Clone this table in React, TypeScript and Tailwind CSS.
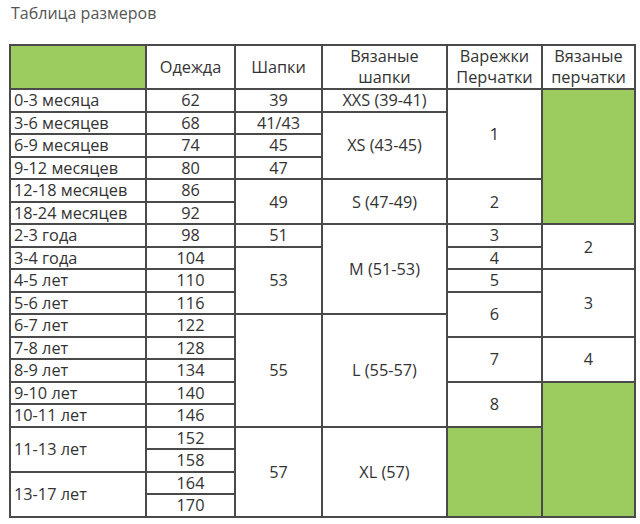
const green = 'bg-[#9ccb5f]';

type Cell = { text?: string; rows?: number; green?: boolean; left?: boolean };

// Body rows, each listing the cells that start in that row
const body: Cell[][] = [
  [{ text: '0-3 месяца', left: true }, { text: '62' }, { text: '39' }, { text: 'XXS (39-41)' }, { text: '1', rows: 4 }, { green: true, rows: 6 }],
  [{ text: '3-6 месяцев', left: true }, { text: '68' }, { text: '41/43' }, { text: 'XS (43-45)', rows: 3 }],
  [{ text: '6-9 месяцев', left: true }, { text: '74' }, { text: '45' }],
  [{ text: '9-12 месяцев', left: true }, { text: '80' }, { text: '47' }],
  [{ text: '12-18 месяцев', left: true }, { text: '86' }, { text: '49', rows: 2 }, { text: 'S (47-49)', rows: 2 }, { text: '2', rows: 2 }],
  [{ text: '18-24 месяцев', left: true }, { text: '92' }],
  [{ text: '2-3 года', left: true }, { text: '98' }, { text: '51' }, { text: 'M (51-53)', rows: 4 }, { text: '3' }, { text: '2', rows: 2 }],
  [{ text: '3-4 года', left: true }, { text: '104' }, { text: '53', rows: 3 }, { text: '4' }],
  [{ text: '4-5 лет', left: true }, { text: '110' }, { text: '5' }, { text: '3', rows: 3 }],
  [{ text: '5-6 лет', left: true }, { text: '116' }, { text: '6', rows: 2 }],
  [{ text: '6-7 лет', left: true }, { text: '122' }, { text: '55', rows: 5 }, { text: 'L (55-57)', rows: 5 }],
  [{ text: '7-8 лет', left: true }, { text: '128' }, { text: '7', rows: 2 }, { text: '4', rows: 2 }],
  [{ text: '8-9 лет', left: true }, { text: '134' }],
  [{ text: '9-10 лет', left: true }, { text: '140' }, { text: '8', rows: 2 }, { green: true, rows: 6 }],
  [{ text: '10-11 лет', left: true }, { text: '146' }],
  [{ text: '11-13 лет', left: true, rows: 2 }, { text: '152' }, { text: '57', rows: 4 }, { text: 'XL (57)', rows: 4 }, { green: true, rows: 4 }],
  [{ text: '158' }],
  [{ text: '13-17 лет', left: true, rows: 2 }, { text: '164' }],
  [{ text: '170' }],
];

const border = 'border-2 border-[#4a4a4a]';

export default function App() {
  return (
    <div className="w-[640px] h-[524px] bg-white text-[#333] font-['Open_Sans',sans-serif] overflow-hidden">
      <h1 className="pl-[11px] pt-[3px] text-[16px] leading-[21px] text-[#555]">Таблица размеров</h1>
      <table className="ml-[9px] mt-[20px] w-[625px] border-collapse table-fixed text-[16.3px] font-medium">
        <colgroup>
          <col className="w-[136px]" />
          <col className="w-[89px]" />
          <col className="w-[87px]" />
          <col className="w-[125px]" />
          <col className="w-[95px]" />
          <col className="w-[93px]" />
        </colgroup>
        <thead>
          <tr className="h-[44px] leading-[21px]">
            <th className={`${border} ${green}`}></th>
            <th className={`${border} font-medium`}>Одежда</th>
            <th className={`${border} font-medium`}>Шапки</th>
            <th className={`${border} font-medium`}>Вязаные<br />шапки</th>
            <th className={`${border} font-medium`}>Варежки<br />Перчатки</th>
            <th className={`${border} font-medium`}>Вязаные<br />перчатки</th>
          </tr>
        </thead>
        <tbody>
          {body.map((row, i) => (
            <tr key={i} className="h-[22.5px] leading-[20px]">
              {row.map((c, j) => (
                <td
                  key={j}
                  rowSpan={c.rows}
                  className={`${border} p-0 ${c.left ? 'text-left pl-[3px]' : 'text-center'} ${c.green ? green : ''}`}
                >
                  {c.text}
                </td>
              ))}
            </tr>
          ))}
        </tbody>
      </table>
    </div>
  );
}
